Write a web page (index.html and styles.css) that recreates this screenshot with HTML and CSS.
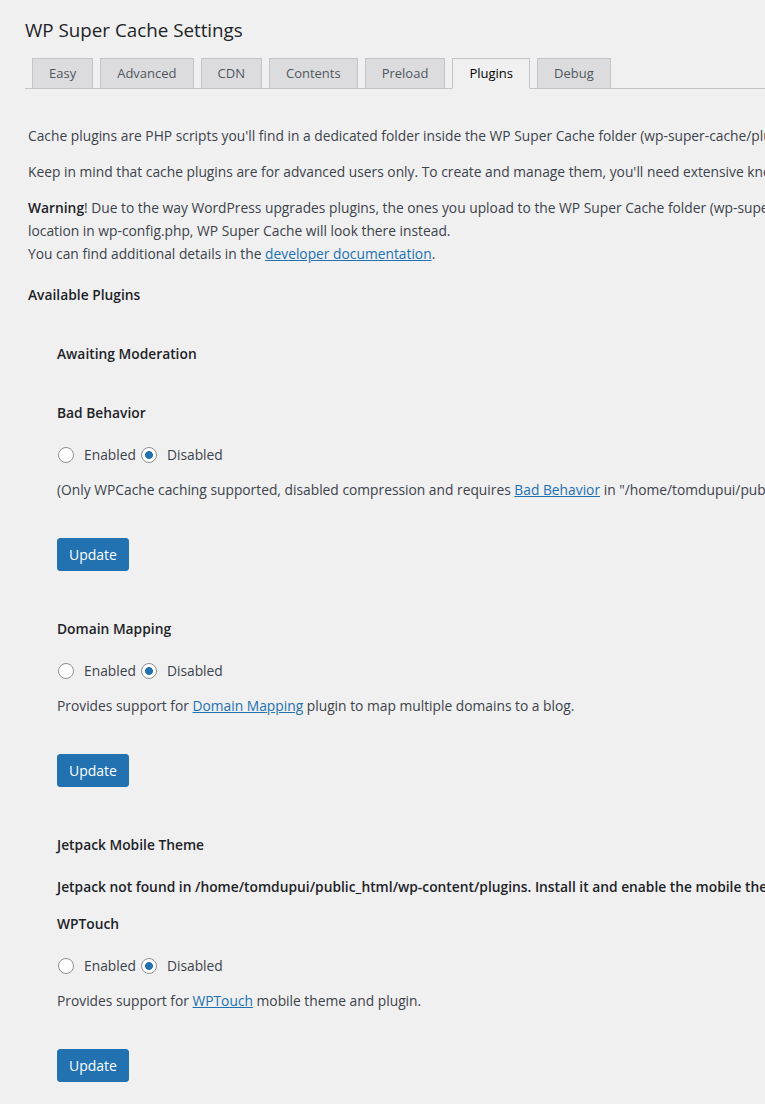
FILE: index.html
```html
<!DOCTYPE html>
<html lang="en">
<head>
  <meta charset="utf-8" />
  <title>WP Super Cache Settings</title>
  <link rel="stylesheet" href="styles.css">
</head>
<body>
  <div class="wrap">
    <h1 class="page-title">WP Super Cache Settings</h1>

    <nav class="tabs">
      <a class="tab" href="#">Easy</a>
      <a class="tab" href="#">Advanced</a>
      <a class="tab" href="#">CDN</a>
      <a class="tab" href="#">Contents</a>
      <a class="tab" href="#">Preload</a>
      <a class="tab active" href="#">Plugins</a>
      <a class="tab" href="#">Debug</a>
    </nav>

    <div class="content">
      <p class="intro">Cache plugins are PHP scripts you'll find in a dedicated folder inside the WP Super Cache folder (wp-super-cache/plugins/). They load at the same time as WP Super Cache, and before regular WordPress plugins.</p>
      <p class="intro">Keep in mind that cache plugins are for advanced users only. To create and manage them, you'll need extensive knowledge of both PHP and WordPress actions.</p>
      <p class="intro"><strong>Warning</strong>! Due to the way WordPress upgrades plugins, the ones you upload to the WP Super Cache folder (wp-super-cache/plugins/) will be deleted when you upgrade WP Super Cache. To avoid this loss, load your cache plugins from a different location. When you set $wp_cache_plugins_dir to the new<br>location in wp-config.php, WP Super Cache will look there instead.<br>You can find additional details in the <a href="#">developer documentation</a>.</p>

      <h3 class="section-title">Available Plugins</h3>

      <div class="plugins">
        <h4 class="plugin-title group-title">Awaiting Moderation</h4>

        <form class="plugin">
          <h4 class="plugin-title">Bad Behavior</h4>
          <div class="radios">
            <label class="radio"><input type="radio" name="bb"> Enabled</label>
            <label class="radio"><input type="radio" name="bb" checked> Disabled</label>
          </div>
          <p class="plugin-desc">(Only WPCache caching supported, disabled compression and requires <a href="#">Bad Behavior</a> in "/home/tomdupui/public_html/wp-content/plugins/bad-behavior/")</p>
          <button type="button" class="btn">Update</button>
        </form>

        <form class="plugin">
          <h4 class="plugin-title">Domain Mapping</h4>
          <div class="radios">
            <label class="radio"><input type="radio" name="dm"> Enabled</label>
            <label class="radio"><input type="radio" name="dm" checked> Disabled</label>
          </div>
          <p class="plugin-desc">Provides support for <a href="#">Domain Mapping</a> plugin to map multiple domains to a blog.</p>
          <button type="button" class="btn">Update</button>
        </form>

        <div class="plugin">
          <h4 class="plugin-title">Jetpack Mobile Theme</h4>
          <p class="plugin-note">Jetpack not found in /home/tomdupui/public_html/wp-content/plugins. Install it and enable the mobile theme and this helper plugin to cache visits by mobile visitors.</p>
        </div>

        <form class="plugin plugin-tight">
          <h4 class="plugin-title">WPTouch</h4>
          <div class="radios">
            <label class="radio"><input type="radio" name="wpt"> Enabled</label>
            <label class="radio"><input type="radio" name="wpt" checked> Disabled</label>
          </div>
          <p class="plugin-desc">Provides support for <a href="#">WPTouch</a> mobile theme and plugin.</p>
          <button type="button" class="btn">Update</button>
        </form>
      </div>
    </div>
  </div>
</body>
</html>
```

FILE: styles.css
```css
* { box-sizing: border-box; }
html { overflow: hidden; }
body {
  margin: 0;
  background: #f0f0f1;
  color: #3c434a;
  font-family: "Open Sans", "Noto Sans", sans-serif;
  font-size: 13.8px;
  line-height: 23px;
}
a { color: #2271b1; }

.wrap { padding: 0 0 40px 25px; width: 1400px; }

.page-title {
  margin: 16px 0 14px;
  font-size: 18.8px;
  line-height: 28px;
  font-weight: 500;
  color: #1d2327;
}

.tabs {
  display: flex;
  gap: 7px;
  padding-left: 7px;
  border-bottom: 1px solid #c3c4c7;
  width: 740px;
}
.tab {
  display: block;
  margin-bottom: -1px;
  padding: 3px 16px;
  line-height: 23px;
  background: #dcdcde;
  border: 1px solid #c3c4c7;
  color: #50575e;
  text-decoration: none;
  font-size: 13px;
}
.tab.active {
  background: #f0f0f1;
  border-bottom-color: #f0f0f1;
  color: #000;
}

.content { padding-left: 3px; padding-top: 35px; }

.intro { margin: 0 0 13px; white-space: nowrap; }
.intro strong { font-weight: 600; color: #1d2327; }

.section-title {
  margin: 18px 0 0;
  font-size: 13.8px;
  font-weight: 600;
  color: #1d2327;
}

.plugins { padding-left: 29px; padding-top: 36px; }

.plugin-title {
  margin: 0;
  font-size: 13.8px;
  font-weight: 600;
  color: #1d2327;
}
.group-title { margin-bottom: 36px; }

.plugin { margin: 0 0 46px; }
.plugin-tight { margin-top: -32px; }

.radios { display: flex; gap: 4px; margin-top: 19px; height: 23px; align-items: center; }
.radio { display: flex; align-items: center; gap: 10px; }
.radio input {
  appearance: none;
  margin: 0 0 0 1px;
  width: 16px;
  height: 16px;
  border: 1px solid #8c8f94;
  border-radius: 50%;
  background: #fff;
}
.radio input:checked {
  background: radial-gradient(circle, #2271b1 0 3.6px, #fff 4.2px);
}

.plugin-desc { margin: 12px 0 0; white-space: nowrap; }
.plugin-note {
  margin: 19px 0 0;
  white-space: nowrap;
  font-weight: 600;
  color: #1d2327;
}

.btn {
  display: block;
  margin-top: 37px;
  height: 33px;
  padding: 0 11px;
  background: #2271b1;
  border: 1px solid #2271b1;
  border-radius: 3px;
  color: #fff;
  font-family: inherit;
  font-size: 14px;
}
```
